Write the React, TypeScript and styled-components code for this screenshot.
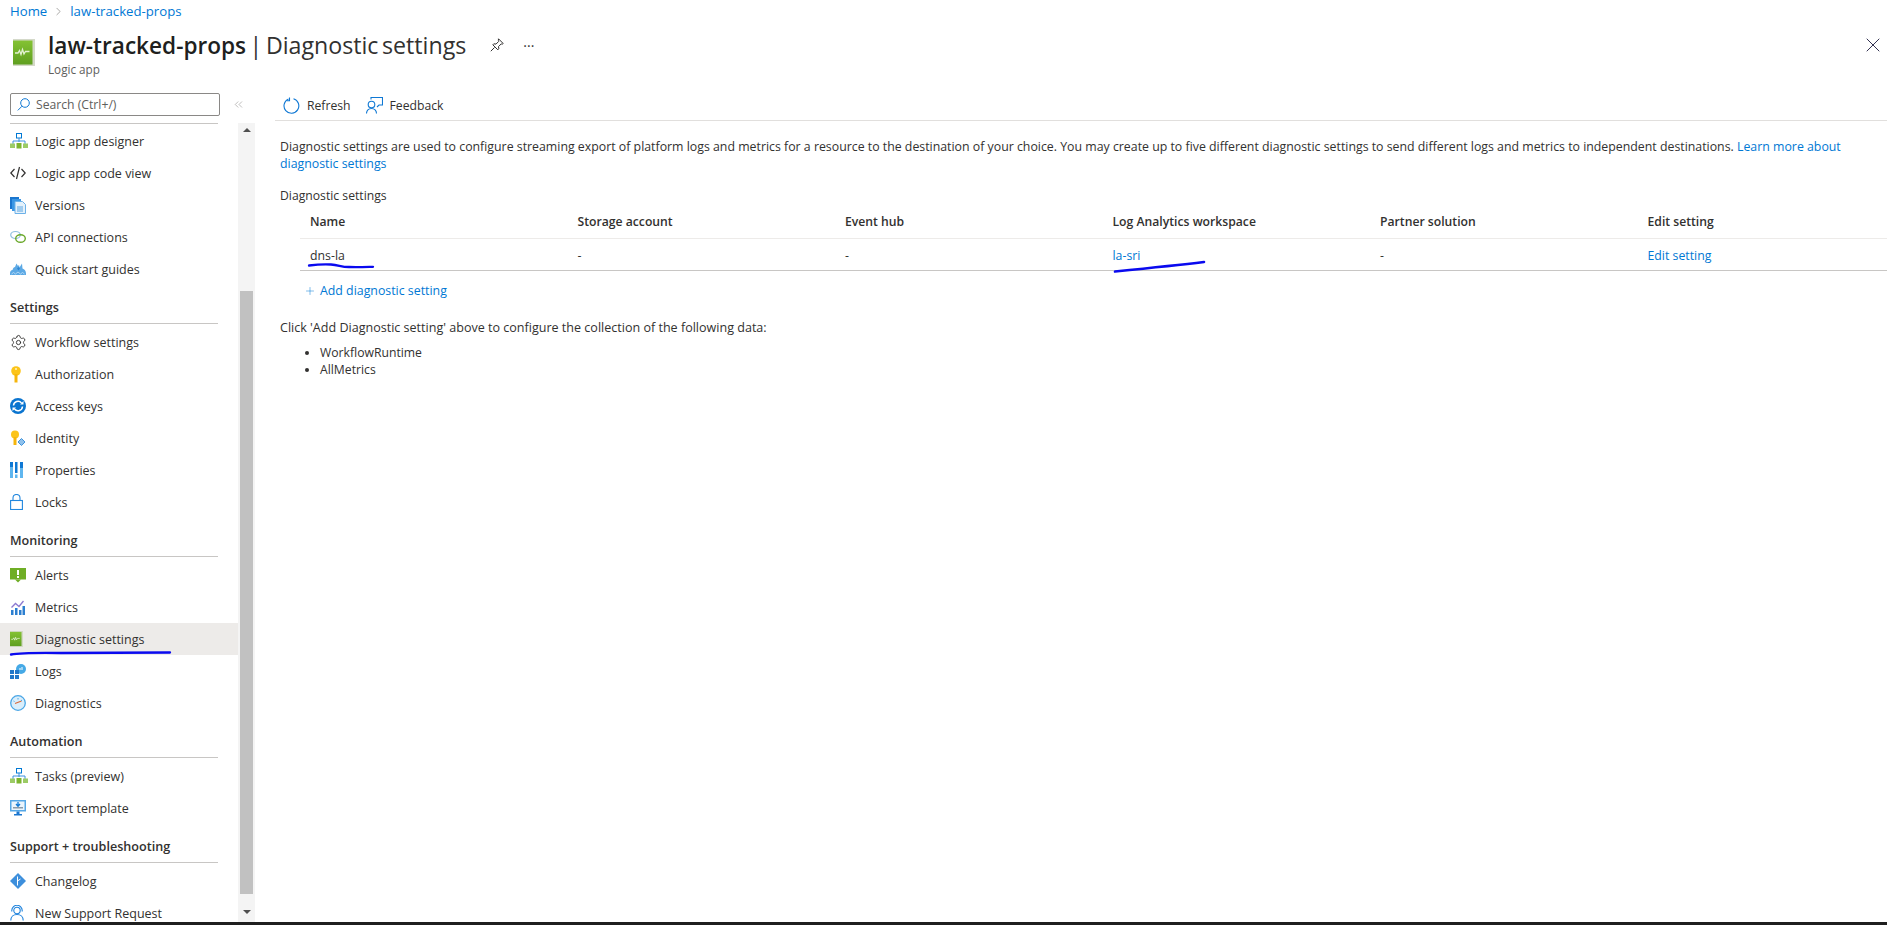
import React from 'react';
import styled, { createGlobalStyle } from 'styled-components';
import { ChevronRight, ChevronsLeft, Plus, Settings, X } from 'lucide-react';

const FONT = '"Open Sans", "Noto Sans", Arial, sans-serif';

const GlobalStyle = createGlobalStyle`
  html, body {
    margin: 0;
    padding: 0;
    background: #fff;
  }
  body {
    font-family: ${FONT};
    font-size: 12.2px;
    color: #323130;
    overflow: hidden;
  }
  * {
    box-sizing: border-box;
  }
`;

const BookIcon = ({ size = 16 }: { size?: number }) => (
  <svg width={size} height={size * 1.23} viewBox="0 0 22 27">
    <defs>
      <linearGradient id="bookFill" x1="0" y1="0" x2="0" y2="1">
        <stop offset="0" stopColor="#84c233" />
        <stop offset="1" stopColor="#5f9f20" />
      </linearGradient>
    </defs>
    <rect x="0" y="0" width="22" height="27" fill="#d4d9c8" />
    <rect x="0" y="1.500" width="19.500" height="24" fill="url(#bookFill)" />
    <path d="M2 14h3l1.500-2.500 1.500 4 1.500-5 1.500 4.500 1.500-2.500h4" fill="none" stroke="#e4f2d2" strokeWidth="1.300" />
  </svg>
);

const TreeIcon = () => (
  <svg width="18" height="16" viewBox="0 0 18 16">
    <rect x="6.500" y="0.500" width="5" height="4.500" fill="#fff" stroke="#0078d4" />
    <path d="M9 5v4M3 11V8h12v3" fill="none" stroke="#3c91e0" />
    <rect x="0" y="10.500" width="5" height="4.500" fill="#9ccb65" />
    <rect x="6.500" y="10" width="5" height="5.500" fill="#7db52f" />
    <rect x="13" y="10.500" width="5" height="4.500" fill="#9ccb65" />
  </svg>
);

const CodeIcon = () => (
  <svg width="16" height="14" viewBox="0 0 16 14" fill="none" stroke="#323130" strokeWidth="1.200">
    <path d="M4.500 3L0.800 7l3.700 4M11.500 3l3.700 4-3.700 4M9.500 1L6.500 13" />
  </svg>
);

const VersionsIcon = () => (
  <svg width="16" height="17" viewBox="0 0 16 17">
    <rect x="0" y="0" width="9" height="12" fill="#1b76cf" />
    <rect x="2" y="2" width="9" height="12" fill="#3a96e4" />
    <path d="M5 4.500h7.500l3 3V16.500H5z" fill="#e4f1fb" stroke="#6cb1e8" />
    <path d="M7 10h6M7 12h6M7 14h6" stroke="#5aa5e2" />
  </svg>
);

const ApiIcon = () => (
  <svg width="16" height="14" viewBox="0 0 16 14" fill="none">
    <ellipse cx="5.500" cy="5" rx="4.800" ry="3.500" stroke="#8fbfe0" strokeWidth="1.200" />
    <ellipse cx="10.500" cy="8.500" rx="4.800" ry="3.800" stroke="#6aa82a" strokeWidth="1.400" />
  </svg>
);

const CloudIcon = () => (
  <svg width="16" height="14" viewBox="0 0 16 14">
    <path d="M0 13v-1.500C0 9.500 1 8 2.500 8 3 6 4 5 5 5l1.500-3.500L8 4l1-1 .5 2.500L12 1.500l.5 5C14.500 7 16 9 16 11.500V13z" fill="#5ca9e5" />
    <path d="M1.500 12l2-1.500 2 1.500 2.500-2 2.500 2 2-1.500 2 1.500" fill="none" stroke="#b9dbf5" strokeWidth="0.900" />
    <path d="M7 6.500l1.500-1.500 1.500 1.500-1.500 2z" fill="#2d86d4" />
  </svg>
);

const KeyIcon = () => (
  <svg width="12" height="17" viewBox="0 0 12 17">
    <circle cx="6" cy="5" r="4.800" fill="#fcc419" />
    <rect x="4.500" y="8" width="3" height="8.500" fill="#f5b50c" />
    <circle cx="6" cy="3" r="1" fill="#fff3c4" />
  </svg>
);

const SyncIcon = () => (
  <svg width="16" height="16" viewBox="0 0 16 16">
    <circle cx="8" cy="8" r="8" fill="#0a74cf" />
    <path d="M3.500 7.500A4.500 4.500 0 0 1 11.500 5M12.500 8.500A4.500 4.500 0 0 1 4.500 11" fill="none" stroke="#fff" strokeWidth="1.500" />
    <path d="M10 6.500h3.500V3zM6 9.500H2.500V13z" fill="#fff" />
  </svg>
);

const IdentityIcon = () => (
  <svg width="16" height="16" viewBox="0 0 16 16">
    <circle cx="5" cy="4.500" r="4" fill="#fcc419" />
    <rect x="3.500" y="7" width="3" height="8" fill="#f5b50c" />
    <path d="M11.500 8.500L15 12l-3.500 3.500L8 12z" fill="#8fc1ec" stroke="#3f93dc" />
  </svg>
);

const PropertiesIcon = () => (
  <svg width="13" height="16" viewBox="0 0 13 16">
    <rect x="0" y="0" width="3" height="5" fill="#0f78d4" />
    <rect x="0" y="5" width="3" height="11" fill="#5fb6ef" />
    <rect x="5" y="0" width="2.500" height="11" fill="#0f78d4" />
    <rect x="5" y="12.500" width="2.500" height="3.500" fill="#5fb6ef" />
    <rect x="10" y="0" width="3" height="6" fill="#0f78d4" />
    <rect x="10" y="6" width="3" height="10" fill="#5fb6ef" />
  </svg>
);

const LockIcon = () => (
  <svg width="13" height="16" viewBox="0 0 13 16" fill="none" stroke="#2187de" strokeWidth="1.100">
    <rect x="0.600" y="6.500" width="11.800" height="9" />
    <path d="M3 6.500V4a3.500 3.500 0 0 1 7 0v2.500" />
  </svg>
);

const AlertIcon = () => (
  <svg width="16" height="15" viewBox="0 0 16 15">
    <rect x="0" y="0" width="16" height="11.500" fill="#6fae25" />
    <path d="M5 11.500h6L8 14.500z" fill="#6fae25" />
    <rect x="7" y="2" width="2" height="5" fill="#fff" />
    <rect x="7" y="8" width="2" height="2" fill="#fff" />
  </svg>
);

const MetricsIcon = () => (
  <svg width="15" height="15" viewBox="0 0 15 15">
    <rect x="1" y="10" width="2.500" height="5" fill="#2c7fd0" />
    <rect x="5" y="8" width="2.500" height="7" fill="#2c7fd0" />
    <rect x="9" y="10" width="2.500" height="5" fill="#2c7fd0" />
    <rect x="12.500" y="6" width="2.500" height="9" fill="#2c7fd0" />
    <path d="M1.500 7.500L5.500 3.500 9 6.500 13.500 1" fill="none" stroke="#8d7ad0" strokeWidth="1.300" />
  </svg>
);

const LogsIcon = () => (
  <svg width="16" height="15" viewBox="0 0 16 15">
    <circle cx="11" cy="5" r="5" fill="#45a9e6" />
    <rect x="0" y="6" width="4" height="4" fill="#2277c9" />
    <rect x="5" y="6" width="4" height="4" fill="#2277c9" />
    <rect x="0" y="11" width="4" height="4" fill="#2277c9" />
    <rect x="5" y="11" width="4" height="4" fill="#2277c9" />
    <path d="M10 6V4M12 6V3" stroke="#fff" />
  </svg>
);

const GaugeIcon = () => (
  <svg width="16" height="16" viewBox="0 0 16 16">
    <circle cx="8" cy="8" r="7.300" fill="#d9eefb" stroke="#4aa6e6" strokeWidth="1.300" />
    <path d="M5 8.500L11.500 6" stroke="#d86a3c" strokeWidth="1.200" />
    <path d="M3.500 6l1 .5M8 3v1.500M12 5l-1 .8" stroke="#4aa6e6" />
  </svg>
);

const ExportIcon = () => (
  <svg width="16" height="16" viewBox="0 0 16 16">
    <rect x="0" y="0" width="16" height="11.500" fill="#55a7e6" />
    <rect x="1.500" y="1.500" width="13" height="8.500" fill="#eaf4fc" />
    <path d="M8 2v3.500M6 4l2 2.200L10 4" fill="none" stroke="#0f78d4" strokeWidth="1.300" />
    <rect x="3" y="7" width="10" height="1.500" fill="#8a9aa8" />
    <rect x="6.500" y="11.500" width="3" height="2.500" fill="#1b76cf" />
    <rect x="4" y="14" width="8" height="1.500" fill="#1b76cf" />
  </svg>
);

const ChangelogIcon = () => (
  <svg width="16" height="16" viewBox="0 0 16 16">
    <path d="M8 0l8 8-8 8-8-8z" fill="#3d8fdc" />
    <path d="M7.500 3.500v9M7.500 8l3 -2" fill="none" stroke="#fff" strokeWidth="1" />
  </svg>
);

const SupportIcon = () => (
  <svg width="14" height="16" viewBox="0 0 14 16" fill="none" stroke="#1c81dc" strokeWidth="1.100">
    <circle cx="7" cy="5.500" r="3.200" />
    <path d="M1.800 6.500V5.500a5.200 5.200 0 0 1 10.400 0v1" />
    <path d="M0.800 15.500c0-3.500 2.500-6 6.200-6s6.200 2.500 6.200 6" />
  </svg>
);

const RefreshIcon = () => (
  <svg width="17" height="17" viewBox="0 0 17 17" fill="none" stroke="#0f78d4" strokeWidth="1.100">
    <path d="M5.500 2a7.400 7.400 0 1 0 5 -.3" />
    <path d="M6.500 0.500v3.300H3.400" />
  </svg>
);

const FeedbackIcon = () => (
  <svg width="17" height="17" viewBox="0 0 17 17" fill="none" stroke="#0f78d4" strokeWidth="1.100">
    <circle cx="5.500" cy="7.500" r="3.300" />
    <path d="M0.500 16.500c0-3 2-5 5-5s5 2 5 5" />
    <path d="M5 2.500V0.500h11.500v7.500H13l-2 2" />
  </svg>
);

const PinIcon = () => (
  <svg width="14" height="14" viewBox="0 0 14 14" fill="none" stroke="#323130" strokeWidth="1">
    <path d="M8.500 0.800l4.700 4.700-1 .7-1-.3-2.700 2.700.3 2.200-1 1-5-5 1-1 2.200.3 2.700-2.700-.3-1z" />
    <path d="M4.500 9.500L0.800 13.200" />
  </svg>
);

const SearchIcon = () => (
  <svg width="13" height="13" viewBox="0 0 13 13" fill="none" stroke="#0f78d4" strokeWidth="1">
    <circle cx="8" cy="5" r="4.300" />
    <path d="M5 8.200L0.800 12.400" />
  </svg>
);

type MenuEntry = { label: string; icon: React.ReactNode; active?: boolean };
type MenuGroup = { title?: string; items: MenuEntry[] };

const menu: MenuGroup[] = [
  {
    items: [
      { label: 'Logic app designer', icon: <TreeIcon /> },
      { label: 'Logic app code view', icon: <CodeIcon /> },
      { label: 'Versions', icon: <VersionsIcon /> },
      { label: 'API connections', icon: <ApiIcon /> },
      { label: 'Quick start guides', icon: <CloudIcon /> },
    ],
  },
  {
    title: 'Settings',
    items: [
      { label: 'Workflow settings', icon: <Settings size={17} strokeWidth={1.3} color="#323130" /> },
      { label: 'Authorization', icon: <KeyIcon /> },
      { label: 'Access keys', icon: <SyncIcon /> },
      { label: 'Identity', icon: <IdentityIcon /> },
      { label: 'Properties', icon: <PropertiesIcon /> },
      { label: 'Locks', icon: <LockIcon /> },
    ],
  },
  {
    title: 'Monitoring',
    items: [
      { label: 'Alerts', icon: <AlertIcon /> },
      { label: 'Metrics', icon: <MetricsIcon /> },
      { label: 'Diagnostic settings', icon: <BookIcon size={13} />, active: true },
      { label: 'Logs', icon: <LogsIcon /> },
      { label: 'Diagnostics', icon: <GaugeIcon /> },
    ],
  },
  {
    title: 'Automation',
    items: [
      { label: 'Tasks (preview)', icon: <TreeIcon /> },
      { label: 'Export template', icon: <ExportIcon /> },
    ],
  },
  {
    title: 'Support + troubleshooting',
    items: [
      { label: 'Changelog', icon: <ChangelogIcon /> },
      { label: 'New Support Request', icon: <SupportIcon /> },
    ],
  },
];

const columns = ['Name', 'Storage account', 'Event hub', 'Log Analytics workspace', 'Partner solution', 'Edit setting'];

const App = () => {
  return (
    <Page>
      <GlobalStyle />
      <Breadcrumb>
        <a>Home</a>
        <ChevronRight size={13} strokeWidth={1} color="#605e5c" />
        <a>law-tracked-props</a>
      </Breadcrumb>
      <TitleRow>
        <TitleIcon>
          <BookIcon size={22} />
        </TitleIcon>
        <TitleText>
          <TitleLine>
            <h1>
              <b>law-tracked-props</b> | Diagnostic settings
            </h1>
            <PinButton>
              <PinIcon />
            </PinButton>
            <Dots>···</Dots>
          </TitleLine>
          <Subtitle>Logic app</Subtitle>
        </TitleText>
        <CloseButton>
          <X size={24} strokeWidth={1} color="#323150" />
        </CloseButton>
      </TitleRow>
      <Body>
        <Sidebar>
          <SearchRow>
            <SearchBox>
              <SearchIcon />
              <span>Search (Ctrl+/)</span>
            </SearchBox>
            <Collapse>
              <ChevronsLeft size={13} strokeWidth={1} color="#8a8886" />
            </Collapse>
          </SearchRow>
          <MenuArea>
            <MenuList>
              <TopDivider />
              {menu.map((group, i) => (
                <section key={i}>
                  {group.title && <GroupTitle>{group.title}</GroupTitle>}
                  {group.items.map((item) => (
                    <MenuItem key={item.label} $active={item.active}>
                      <MenuIcon>{item.icon}</MenuIcon>
                      <span>{item.label}</span>
                    </MenuItem>
                  ))}
                </section>
              ))}
            </MenuList>
            <Scrollbar>
              <ArrowUp />
              <Thumb />
              <ArrowDown />
            </Scrollbar>
          </MenuArea>
        </Sidebar>
        <Main>
          <Toolbar>
            <ToolButton>
              <RefreshIcon />
              <span>Refresh</span>
            </ToolButton>
            <ToolButton>
              <FeedbackIcon />
              <span>Feedback</span>
            </ToolButton>
          </Toolbar>
          <Content>
            <Intro>
              Diagnostic settings are used to configure streaming export of platform logs and metrics for a resource to
              the destination of your choice. You may create up to five different diagnostic settings to send different
              logs and metrics to independent destinations. <a>Learn more about diagnostic settings</a>
            </Intro>
            <TableLabel>Diagnostic settings</TableLabel>
            <Table>
              <HeaderRow>
                {columns.map((c) => (
                  <HeaderCell key={c}>{c}</HeaderCell>
                ))}
              </HeaderRow>
              <DataRow>
                <Cell>dns-la</Cell>
                <Cell>-</Cell>
                <Cell>-</Cell>
                <Cell>
                  <a>la-sri</a>
                </Cell>
                <Cell>-</Cell>
                <Cell>
                  <a>Edit setting</a>
                </Cell>
              </DataRow>
            </Table>
            <AddLink>
              <Plus size={12} strokeWidth={1} color="#0078d4" />
              <span>Add diagnostic setting</span>
            </AddLink>
            <Hint>Click 'Add Diagnostic setting' above to configure the collection of the following data:</Hint>
            <DataList>
              <li>WorkflowRuntime</li>
              <li>AllMetrics</li>
            </DataList>
          </Content>
        </Main>
      </Body>
      <BottomBand />
      {/* hand-drawn marks sitting on top of the screenshot */}
      <Scribbles width="1887" height="925" viewBox="0 0 1887 925" fill="none" stroke="#0a0aef" strokeLinecap="round">
        <path d="M309 265.500c8-1 14-1.500 22-1 8 .5 10 2.500 18 2.500 8 .3 16 0 24-.2" strokeWidth="2.300" />
        <path d="M1115 271.500c30-3 60-6 89-9.500" strokeWidth="2.600" />
        <path d="M11 654.500c10-1.800 30-1.800 50-1.500l109-.5" strokeWidth="2.300" />
      </Scribbles>
    </Page>
  );
};

const Page = styled.div`
  position: relative;
  width: 1887px;
  height: 925px;
  display: flex;
  flex-direction: column;
  overflow: hidden;
  background: #fff;
`;

const Breadcrumb = styled.nav`
  height: 22px;
  padding-left: 10px;
  display: flex;
  align-items: center;
  gap: 5px;
  font-size: 13.200px;

  a {
    color: #0078d4;
  }
`;

const TitleRow = styled.header`
  margin-top: 7px;
  height: 48px;
  display: flex;
  padding-left: 13px;
`;

const TitleIcon = styled.div`
  width: 35px;
  padding-top: 10px;
`;

const TitleText = styled.div`
  flex: 1;
  display: flex;
  flex-direction: column;
`;

const TitleLine = styled.div`
  height: 32px;
  display: flex;
  align-items: center;

  h1 {
    margin: 0;
    font-size: 23.200px;
    font-weight: 400;
    line-height: 32px;
    word-spacing: -2.500px;
    color: #323130;
    white-space: nowrap;
  }

  b {
    font-size: 22.600px;
    font-weight: 600;
    color: #201f1e;
  }
`;

const PinButton = styled.div`
  margin-left: 24px;
  display: flex;
`;

const Dots = styled.div`
  margin-left: 19px;
  font-size: 14px;
  color: #323130;
`;

const Subtitle = styled.div`
  height: 16px;
  line-height: 16px;
  font-size: 11.700px;
  color: #605e5c;
`;

const CloseButton = styled.div`
  width: 26px;
  height: 32px;
  display: flex;
  align-items: center;
`;

const Body = styled.div`
  flex: 1;
  min-height: 0;
  display: flex;
`;

const Sidebar = styled.aside`
  width: 255px;
  display: flex;
  flex-direction: column;
  padding-top: 16px;
`;

const SearchRow = styled.div`
  display: flex;
  align-items: center;
  height: 23px;
  padding-left: 10px;
`;

const SearchBox = styled.div`
  width: 210px;
  height: 23px;
  border: 1px solid #8a8886;
  border-radius: 2px;
  display: flex;
  align-items: center;
  gap: 6px;
  padding-left: 6px;
  color: #605e5c;
`;

const Collapse = styled.div`
  margin-left: 12px;
  display: flex;
`;

const MenuArea = styled.div`
  flex: 1;
  min-height: 0;
  margin-top: 7px;
  display: flex;
`;

const MenuList = styled.div`
  width: 238px;
  overflow: hidden;
  font-size: 12.500px;
`;

const TopDivider = styled.div`
  height: 1px;
  margin: 0 20px 1px 10px;
  background: #c8c6c4;
`;

const GroupTitle = styled.h3`
  margin: 14px 20px 2px 10px;
  height: 25px;
  line-height: 18px;
  font-size: 12.600px;
  font-weight: 600;
  color: #323130;
  border-bottom: 1px solid #c8c6c4;
`;

const MenuItem = styled.div<{ $active?: boolean }>`
  height: 32px;
  display: flex;
  align-items: center;
  padding-left: 10px;
  background: ${(p) => (p.$active ? '#edebe9' : 'transparent')};
`;

const MenuIcon = styled.span`
  width: 25px;
  display: flex;
  align-items: center;
`;

const Scrollbar = styled.div`
  width: 17px;
  padding-left: 2px;
  display: flex;
  flex-direction: column;
  align-items: flex-start;
  background: #f4f4f4;
`;

const ArrowUp = styled.div`
  width: 0;
  margin: 5px 0 0 3px;
  border-left: 4px solid transparent;
  border-right: 4px solid transparent;
  border-bottom: 4px solid #505050;
`;

const Thumb = styled.div`
  width: 13px;
  height: 603px;
  margin-top: 159px;
  background: #c1c1c1;
`;

const ArrowDown = styled.div`
  width: 0;
  margin: 16px 0 0 3px;
  border-left: 4px solid transparent;
  border-right: 4px solid transparent;
  border-top: 4px solid #505050;
`;

const Main = styled.main`
  flex: 1;
  min-width: 0;
  margin-left: 20px;
  padding-top: 16px;
  overflow: hidden;
`;

const Toolbar = styled.div`
  height: 28px;
  padding: 2px 0 5px 8px;
  display: flex;
  align-items: center;
  gap: 15px;
  border-bottom: 1px solid #e1dfdd;
`;

const ToolButton = styled.div`
  display: flex;
  align-items: center;
  gap: 7px;
`;

const Content = styled.div`
  padding: 17px 0 0 5px;

  a {
    color: #0078d4;
  }
`;

const Intro = styled.p`
  margin: 0;
  max-width: 1575px;
  line-height: 17px;
  font-size: 12.340px;
`;

const TableLabel = styled.div`
  margin-top: 15px;
  line-height: 17px;
`;

const Table = styled.div`
  margin-left: 20px;
  width: 1605px;
`;

const HeaderRow = styled.div`
  display: grid;
  grid-template-columns: repeat(6, 267.500px);
  height: 35px;
  border-bottom: 1px solid #edebe9;
`;

const HeaderCell = styled.div`
  padding: 9px 0 0 10px;
  line-height: 17px;
  font-weight: 600;
`;

const DataRow = styled.div`
  display: grid;
  grid-template-columns: repeat(6, 267.500px);
  height: 32px;
  border-bottom: 1px solid #c8c6c4;
  font-size: 12.300px;
`;

const Cell = styled.div`
  padding: 8px 0 0 10px;
  line-height: 17px;
`;

const AddLink = styled.div`
  margin: 11px 0 0 24px;
  display: flex;
  align-items: center;
  gap: 4px;
  line-height: 17px;
  font-size: 12.350px;
  color: #0078d4;
`;

const Hint = styled.p`
  margin: 20px 0 0;
  line-height: 17px;
  font-size: 12.550px;
`;

const DataList = styled.ul`
  margin: 8px 0 0;
  padding-left: 40px;
  line-height: 17px;
`;

const BottomBand = styled.div`
  height: 3px;
  background: #1f1f1f;
`;

const Scribbles = styled.svg`
  position: absolute;
  inset: 0;
  pointer-events: none;
`;

export default App;
